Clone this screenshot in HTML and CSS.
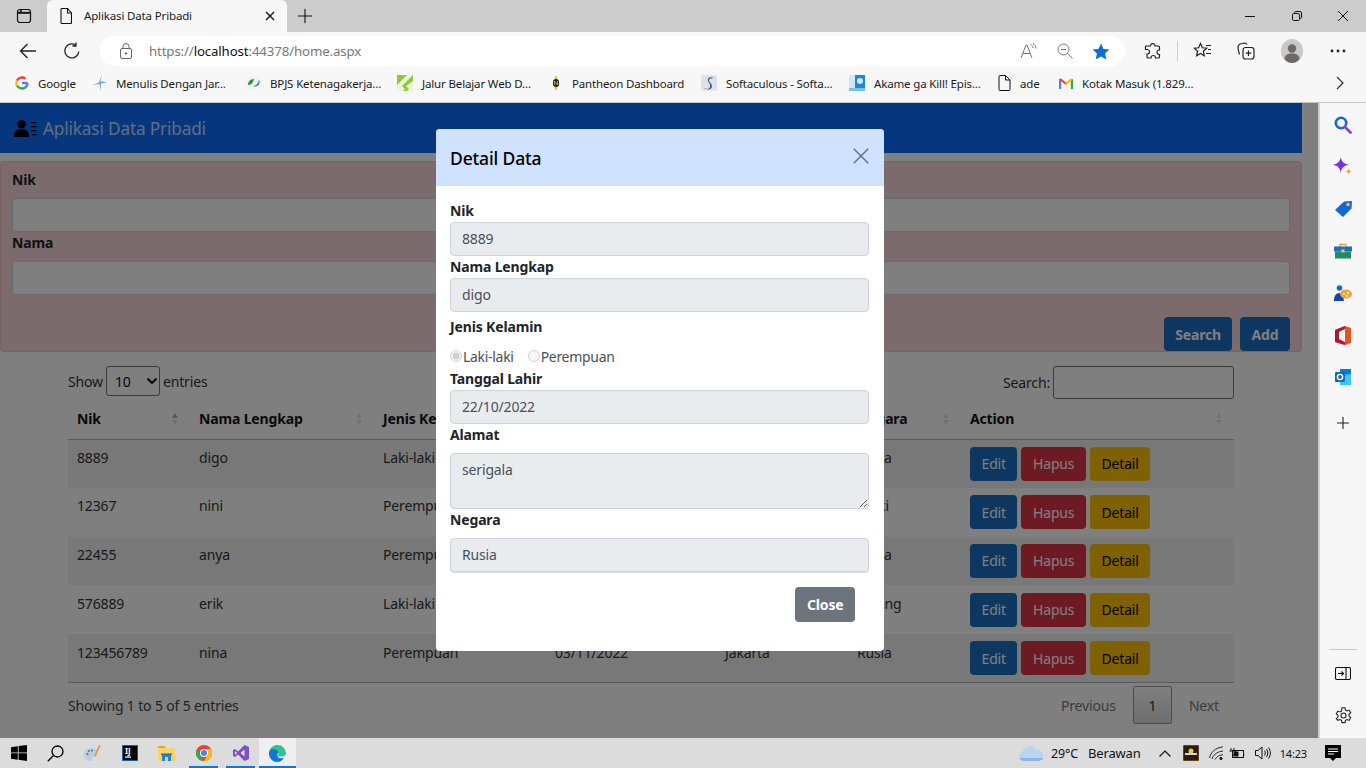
FILE: index.html
```html
<!DOCTYPE html>
<html lang="en">
<head>
  <meta charset="UTF-8">
  <title>Aplikasi Data Pribadi</title>
  <link rel="stylesheet" href="styles.css">
</head>
<body>

  <!-- Tab strip -->
  <div class="tabstrip">
    <span class="tab-action">
      <svg width="16" height="16" viewBox="0 0 16 16" fill="none" stroke="#111" stroke-width="1.2"><rect x="1.5" y="1.5" width="13" height="13" rx="2.5"/><path d="M1.5 5h13M5 1.5V5" stroke-width="1.6"/><path d="M1.5 4.5h13" /></svg>
    </span>
    <div class="tab">
      <svg width="12" height="16" viewBox="0 0 12 16" fill="none" stroke="#111" stroke-width="1.1"><path d="M1 1.5a1 1 0 0 1 1-1h5.5L11.5 5v9.5a1 1 0 0 1-1 1H2a1 1 0 0 1-1-1z"/><path d="M7.5.5V5h4"/></svg>
      <span class="tab-title">Aplikasi Data Pribadi</span>
      <svg class="tab-close" width="10" height="10" viewBox="0 0 10 10" stroke="#111" stroke-width="1.4"><path d="M1 1l8 8M9 1l-8 8"/></svg>
    </div>
    <svg class="tab-new" width="14" height="14" viewBox="0 0 14 14" stroke="#111" stroke-width="1.1"><path d="M7 0v14M0 7h14"/></svg>
    <div class="window-controls">
      <svg width="10" height="10" viewBox="0 0 10 10" stroke="#111"><path d="M0 5.5h10"/></svg>
      <svg width="10" height="10" viewBox="0 0 10 10" fill="none" stroke="#111"><rect x=".5" y="2.5" width="7" height="7" rx="1.2"/><path d="M2.5 2.5V1.8A1.3 1.3 0 0 1 3.8.5h4.4a1.3 1.3 0 0 1 1.3 1.3v4.4a1.3 1.3 0 0 1-1.3 1.3h-.7"/></svg>
      <svg width="10" height="10" viewBox="0 0 10 10" stroke="#111"><path d="M0 0l10 10M10 0L0 10"/></svg>
    </div>
  </div>

  <!-- Address bar -->
  <div class="toolbar">
    <span class="tool-btn">
      <svg width="18" height="16" viewBox="0 0 18 16" fill="none" stroke="#222" stroke-width="1.4"><path d="M17 8H1.5M8.5 1L1.5 8l7 7"/></svg>
    </span>
    <span class="tool-btn">
      <svg width="18" height="18" viewBox="0 0 18 18" fill="none" stroke="#222" stroke-width="1.3"><path d="M15.8 9.5A7 7 0 1 1 12.6 3"/><path d="M13 .5V4H9.5"/></svg>
    </span>
    <div class="urlbar">
      <svg class="lock" width="12" height="16" viewBox="0 0 12 16" fill="none" stroke="#666" stroke-width="1"><rect x=".5" y="5.5" width="11" height="10" rx="1.5"/><path d="M3 5.5V3.5a3 3 0 0 1 6 0v2"/><circle cx="6" cy="10.5" r=".8" fill="#666"/></svg>
      <span class="url"><span class="url-dim">https://</span>localhost<span class="url-dim">:44378/home.aspx</span></span>
      <span class="url-icon">
        <svg width="18" height="16" viewBox="0 0 18 16" fill="none" stroke="#777" stroke-width="1"><path d="M1 15L6 2h1l5 13M3 10.5h7"/><path d="M10.5 1.5c1.5.5 2.5 1.800 2.500 3.500M13 .5c1.800.8 3 2.500 3 5"/></svg>
      </span>
      <span class="url-icon">
        <svg width="16" height="16" viewBox="0 0 16 16" fill="none" stroke="#777" stroke-width="1"><circle cx="6.500" cy="6.500" r="5.500"/><path d="M10.500 10.500l5 5M4 6.500h5"/></svg>
      </span>
      <span class="url-icon">
        <svg width="18" height="17" viewBox="0 0 18 17" fill="#0a6fd1"><path d="M9 .5l2.500 5.500 6 .6-4.500 4 1.300 6L9 13.500l-5.300 3.100 1.300-6-4.500-4 6-.6z"/></svg>
      </span>
    </div>
    <span class="tool-btn wide first">
      <svg width="18" height="18" viewBox="0 0 18 18" fill="none" stroke="#222" stroke-width="1.2"><path d="M6.500 3.500a2.300 2.300 0 0 1 4.500 0V4h3.500a1 1 0 0 1 1 1v3h-.7a2.300 2.300 0 0 0 0 4.500h.7v2.500a1 1 0 0 1-1 1h-3v-.7a2.300 2.300 0 0 0-4.500 0v.7h-3a1 1 0 0 1-1-1v-3h.7a2.300 2.300 0 0 0 0-4.500H1.500V5a1 1 0 0 1 1-1h4z"/></svg>
    </span>
    <span class="tool-sep"></span>
    <span class="tool-btn wide">
      <svg width="19" height="18" viewBox="0 0 19 18" fill="none" stroke="#222" stroke-width="1.2"><path d="M7.500 1.500l1.900 4.300 4.300.4-3.300 3 .9 4.500-3.800-2.300-3.800 2.300.9-4.500-3.300-3 4.300-.4z"/><path d="M13 3.500h5M15 7.500h3M13 11.500h5"/></svg>
    </span>
    <span class="tool-btn wide">
      <svg width="18" height="18" viewBox="0 0 18 18" fill="none" stroke="#222" stroke-width="1.2"><path d="M2.500 12.500C1.500 9 1 6.500 1 5c0-1.500 1-2.500 2-3l5-1c1 0 1.500.5 2 1.500"/><rect x="6" y="5.500" width="11" height="11.500" rx="2.500"/><path d="M11.500 8.500v5.500M8.700 11.200h5.600"/></svg>
    </span>
    <span class="tool-btn wide avatar-btn">
      <svg width="22" height="24" viewBox="0 0 22 24"><ellipse cx="11" cy="12" rx="11" ry="12" fill="#c9c8c6"/><circle cx="11" cy="9.500" r="4.200" fill="#6b6a69"/><path d="M3.500 20c0-3.800 3.400-5.500 7.500-5.500s7.500 1.700 7.500 5.500c-1.800 2.500-4.500 4-7.500 4s-5.700-1.500-7.500-4z" fill="#6b6a69"/></svg>
    </span>
    <span class="tool-btn wide">
      <svg width="16" height="4" viewBox="0 0 16 4" fill="#222"><circle cx="2" cy="2" r="1.400"/><circle cx="8" cy="2" r="1.400"/><circle cx="14" cy="2" r="1.400"/></svg>
    </span>
  </div>

  <!-- Favorites bar -->
  <div class="bookmarks">
    <div class="bookmark">
      <svg width="14" height="14" viewBox="0 0 14 14" fill="none" stroke-width="2.400"><path d="M12.600 7H7" stroke="#4285f4"/><path d="M12.600 7a5.700 5.700 0 0 1-2 4.300" stroke="#4285f4"/><path d="M10.600 11.300A5.700 5.700 0 0 1 2 9.500" stroke="#34a853"/><path d="M2 9.500a5.700 5.700 0 0 1 0-5" stroke="#fbbc05"/><path d="M2 4.500a5.700 5.700 0 0 1 8.400-1.800" stroke="#ea4335"/></svg>
      <span>Google</span>
    </div>
    <div class="bookmark">
      <svg width="14" height="16" viewBox="0 0 14 16" fill="#6fa8dc"><path d="M9 0L7.500 6 14 7.500 7.800 8.500 8 16 6.300 9 0 10l5.800-2.500z"/></svg>
      <span>Menulis Dengan Jar...</span>
    </div>
    <div class="bookmark">
      <svg width="14" height="14" viewBox="0 0 14 14"><circle cx="7" cy="7" r="7" fill="#f1f1f1"/><path d="M1 9c0-4 3-6 6-6-1 3-2 6-6 6z" fill="#1a9a3e"/><path d="M6 10c3 0 5-2 6-6 2 4-2 8-6 6z" fill="#1f7fc4"/></svg>
      <span>BPJS Ketenagakerja...</span>
    </div>
    <div class="bookmark">
      <svg width="16" height="16" viewBox="0 0 16 16"><rect width="16" height="16" fill="#8dc63f"/><path d="M0 10L10 0h6L5 11 8 14l-2 2H0zM16 6v10H10l2-2-3-3z" fill="#e9f4d8"/></svg>
      <span>Jalur Belajar Web D...</span>
    </div>
    <div class="bookmark">
      <svg width="14" height="16" viewBox="0 0 14 16"><path d="M7 0l1.500 4h-3zM7 16l-1.500-4h3z" fill="#e8b71a"/><rect x="4" y="4" width="6" height="8" rx="3" fill="#222"/><path d="M5.500 10V6l3 4V6" fill="none" stroke="#e8b71a" stroke-width=".8"/></svg>
      <span>Pantheon Dashboard</span>
    </div>
    <div class="bookmark">
      <svg width="16" height="16" viewBox="0 0 16 16"><rect width="16" height="16" rx="2" fill="#dfe3e8"/><path d="M13 3C9 1 6 3 7 6s3 3 2 6-5 2-7 0c2 3 9 4 9-1 0-3-3-3-3-6 0-1 2-2 5-2z" fill="#3c6080"/></svg>
      <span>Softaculous - Softa...</span>
    </div>
    <div class="bookmark">
      <svg width="16" height="16" viewBox="0 0 16 16"><rect width="16" height="16" fill="#cfe8f6"/><rect x="6" y="0" width="10" height="13" fill="#1d8ad6"/><circle cx="11" cy="6" r="3" fill="#cfe8f6"/><rect x="0" y="13" width="16" height="3" fill="#7cc0e8"/></svg>
      <span>Akame ga Kill! Epis...</span>
    </div>
    <div class="bookmark">
      <svg width="13" height="16" viewBox="0 0 13 16" fill="none" stroke="#111" stroke-width="1"><path d="M1 1.500a1 1 0 0 1 1-1h5.500L12 5v9.500a1 1 0 0 1-1 1H2a1 1 0 0 1-1-1z"/><path d="M7.500.5V5H12"/></svg>
      <span>ade</span>
    </div>
    <div class="bookmark">
      <svg width="14" height="12" viewBox="0 0 14 12" fill="none" stroke-width="2.200"><path d="M1.100 12V2" stroke="#4285f4"/><path d="M12.900 12V2" stroke="#34a853"/><path d="M1.100 2L7 6.800" stroke="#ea4335"/><path d="M7 6.800L12.900 2" stroke="#fbbc05"/></svg>
      <span>Kotak Masuk (1.829...</span>
    </div>
    <svg class="bookmarks-more" width="8" height="14" viewBox="0 0 8 14" fill="none" stroke="#333" stroke-width="1.200"><path d="M1 1l6 6-6 6"/></svg>
  </div>

  <div class="workspace">
    <div class="page">
      <div class="page-inner">

        <div class="navbar">
          <svg width="23" height="17" viewBox="0 0 23 17" fill="#000"><circle cx="7.500" cy="4.200" r="4.200"/><path d="M0 17v-1.800C0 12 2.500 9.500 5 9.500h5c2.500 0 5 2.500 5 5.700V17z"/><path d="M17 2h5.500v1.300H17zM17 6h5.500v1.300H17zM17.500 10h5v1.300h-5zM18 14h4.500v1.300H18z"/></svg>
          <span class="navbar-brand">Aplikasi Data Pribadi</span>
        </div>

        <div class="search-panel">
          <label class="field-label">Nik</label>
          <input class="form-control" type="text">
          <label class="field-label">Nama</label>
          <input class="form-control" type="text">
          <div class="panel-actions">
            <button class="btn btn-blue btn-strong btn-search">Search</button>
            <button class="btn btn-blue btn-strong">Add</button>
          </div>
        </div>

        <div class="table-wrap">
          <div class="table-top">
            <div class="table-length">
              Show
              <span class="select-wrap">
                <select class="length-select"><option>10</option></select>
                <svg width="12" height="8" viewBox="0 0 12 8" fill="none" stroke="#111" stroke-width="2"><path d="M1.500 1.500L6 6l4.500-4.500"/></svg>
              </span>
              entries
            </div>
            <div class="table-filter">Search: <input class="filter-input" type="text"></div>
          </div>

          <table class="data-table">
            <thead>
              <tr>
                <th class="col-nik"><div class="th-inner">Nik <span class="sort sort-active"></span></div></th>
                <th class="col-nama"><div class="th-inner">Nama Lengkap <span class="sort"></span></div></th>
                <th class="col-jk"><div class="th-inner">Jenis Kelamin <span class="sort"></span></div></th>
                <th class="col-tgl"><div class="th-inner">Tanggal Lahir <span class="sort"></span></div></th>
                <th class="col-alamat"><div class="th-inner">Alamat <span class="sort"></span></div></th>
                <th class="col-negara"><div class="th-inner">Negara <span class="sort"></span></div></th>
                <th><div class="th-inner">Action <span class="sort"></span></div></th>
              </tr>
            </thead>
            <tbody>
              <tr>
                <td>8889</td><td>digo</td><td>Laki-laki</td><td>22/10/2022</td><td>serigala</td><td>Rusia</td>
                <td class="actions"><button class="btn btn-blue">Edit</button><button class="btn btn-red">Hapus</button><button class="btn btn-yellow">Detail</button></td>
              </tr>
              <tr>
                <td>12367</td><td>nini</td><td>Perempuan</td><td>01/02/2022</td><td>Bandung</td><td>Turki</td>
                <td class="actions"><button class="btn btn-blue">Edit</button><button class="btn btn-red">Hapus</button><button class="btn btn-yellow">Detail</button></td>
              </tr>
              <tr>
                <td>22455</td><td>anya</td><td>Perempuan</td><td>10/05/2022</td><td>Bogor</td><td>Rusia</td>
                <td class="actions"><button class="btn btn-blue">Edit</button><button class="btn btn-red">Hapus</button><button class="btn btn-yellow">Detail</button></td>
              </tr>
              <tr>
                <td>576889</td><td>erik</td><td>Laki-laki</td><td>15/08/2022</td><td>Depok</td><td>Jepang</td>
                <td class="actions"><button class="btn btn-blue">Edit</button><button class="btn btn-red">Hapus</button><button class="btn btn-yellow">Detail</button></td>
              </tr>
              <tr>
                <td>123456789</td><td>nina</td><td>Perempuan</td><td>03/11/2022</td><td>Jakarta</td><td>Rusia</td>
                <td class="actions"><button class="btn btn-blue">Edit</button><button class="btn btn-red">Hapus</button><button class="btn btn-yellow">Detail</button></td>
              </tr>
            </tbody>
          </table>

          <div class="table-bottom">
            <span>Showing 1 to 5 of 5 entries</span>
            <div class="pager">
              <span class="pager-link">Previous</span>
              <span class="pager-current">1</span>
              <span class="pager-link">Next</span>
            </div>
          </div>
        </div>
      </div>

      <!-- Modal -->
      <div class="backdrop"></div>
      <div class="modal">
        <div class="modal-header">
          <span class="modal-title">Detail Data</span>
          <svg width="16" height="16" viewBox="0 0 16 16" stroke="#6c7480" stroke-width="1.600"><path d="M.8.8l14.400 14.400M15.200.8L.8 15.200"/></svg>
        </div>
        <div class="modal-body">
          <label class="field-label">Nik</label>
          <input class="form-control" type="text" value="8889" disabled>
          <label class="field-label">Nama Lengkap</label>
          <input class="form-control" type="text" value="digo" disabled>
          <label class="field-label label-jk">Jenis Kelamin</label>
          <div class="radio-row">
            <label class="radio-item"><input type="radio" checked disabled>Laki-laki</label>
            <label class="radio-item"><input type="radio" disabled>Perempuan</label>
          </div>
          <label class="field-label">Tanggal Lahir</label>
          <input class="form-control" type="text" value="22/10/2022" disabled>
          <label class="field-label gap-below">Alamat</label>
          <textarea class="form-control area" disabled>serigala</textarea>
          <label class="field-label gap-below">Negara</label>
          <input class="form-control negara-input" type="text" value="Rusia" disabled>
          <div class="modal-footer">
            <button class="btn btn-grey btn-strong">Close</button>
          </div>
        </div>
      </div>
    </div>

    <!-- Edge sidebar -->
    <div class="sidebar">
      <span class="side-icon"><svg width="18" height="18" viewBox="0 0 18 18" fill="none"><circle cx="7" cy="7" r="5.200" stroke="#1467d8" stroke-width="2.600"/><path d="M11 11l5.500 5.500" stroke="#8a3fd6" stroke-width="2.800" stroke-linecap="round"/></svg></span>
      <span class="side-icon"><svg width="20" height="20" viewBox="0 0 18 18"><path d="M7 0c.6 4 2.500 6 7 7-4.500 1-6.400 3-7 7.500C6.400 10 4.500 8 0 7c4.500-1 6.400-3 7-7z" fill="#7b2ff2"/><path d="M14 10c.2 1.800 1 2.600 3 3-2 .4-2.800 1.200-3 3-.2-1.800-1-2.600-3-3 2-.4 2.800-1.200 3-3z" fill="#f5a623"/></svg></span>
      <span class="side-icon"><svg width="17" height="16" viewBox="0 0 17 16"><path d="M0 9l9-8.500 8-.5-.5 7.500L8 16z" fill="#1467d8"/><circle cx="13" cy="3.500" r="1.700" fill="#ffc83d"/></svg></span>
      <span class="side-icon"><svg width="18" height="16" viewBox="0 0 18 16"><path d="M6 4V1.500h6V4" fill="none" stroke="#e8a33d" stroke-width="1.400"/><rect y="3.500" width="18" height="5" fill="#1c6fb8"/><rect x="1" y="8.500" width="16" height="7" fill="#1d8a6e"/><rect x="7.500" y="6.500" width="3" height="3" fill="#ffc83d"/></svg></span>
      <span class="side-icon"><svg width="18" height="17" viewBox="0 0 18 17"><circle cx="5.500" cy="3" r="2.800" fill="#1467d8"/><path d="M0 16c0-5 2-8 5.500-8S9 10 10 16z" fill="#1240b8"/><ellipse cx="12" cy="9" rx="6" ry="4.500" fill="#e8a33d"/><circle cx="10" cy="9" r=".9" fill="#fff"/><circle cx="14" cy="8" r=".9" fill="#fff"/><circle cx="13" cy="11" r=".9" fill="#fff"/></svg></span>
      <span class="side-icon"><svg width="16" height="19" viewBox="0 0 16 19"><path d="M10 0l6 2v15l-6 2-10-3V4z" fill="#e8501f"/><path d="M0 4l10-4v3L4 6v7l6 3v3L0 16z" fill="#b5162e"/><path d="M4 6l6-3v13l-6-3z" fill="#fff"/></svg></span>
      <span class="side-icon"><svg width="16" height="16" viewBox="0 0 16 16"><rect x="5" y="0" width="11" height="16" fill="#28a8ea"/><rect x="5" y="0" width="11" height="5" fill="#0f78d4"/><path d="M5 9l11-4v11H5z" fill="#50d9ff" opacity=".6"/><rect y="3" width="10" height="10" rx="1" fill="#0f6cbd"/><circle cx="5" cy="8" r="2.600" fill="none" stroke="#fff" stroke-width="1.400"/></svg></span>
      <span class="side-icon side-plus"><svg width="14" height="14" viewBox="0 0 14 14" stroke="#222" stroke-width="1.100"><path d="M7 1v12M1 7h12"/></svg></span>
      <div class="side-bottom">
        <span class="side-sep"></span>
        <span class="side-icon"><svg width="16" height="13" viewBox="0 0 16 13" fill="none" stroke="#111" stroke-width="1.100"><rect x=".5" y=".5" width="15" height="12" rx="1.500"/><path d="M11 .5v12M3 6.500h5.500M6.500 4.500l2 2-2 2"/></svg></span>
        <span class="side-icon"><svg width="17" height="17" viewBox="0 0 17 17" fill="none" stroke="#222" stroke-width="1.100"><circle cx="8.500" cy="8.500" r="2.500"/><path d="M7 .8h3l.5 2.300 1.500.8 2.200-.8 1.500 2.600-1.700 1.600v1.800l1.700 1.600-1.500 2.600-2.200-.8-1.500.8-.5 2.300H7l-.5-2.300-1.500-.8-2.200.8L1.300 11.700 3 10.100V8.300L1.300 6.700l1.500-2.600 2.200.8 1.500-.8z"/></svg></span>
      </div>
    </div>
  </div>

  <!-- Windows taskbar -->
  <div class="taskbar">
    <div class="task-apps">
      <span class="task-app"><svg width="16" height="16" viewBox="0 0 16 16" fill="#000"><path d="M0 2.200L6.800 1.200v6.300H0zM7.600 1.100L16 0v7.500H7.600zM0 8.300h6.800v6.400L0 13.800zM7.600 8.300H16V16l-8.400-1.200z"/></svg></span>
      <span class="task-app"><svg width="17" height="17" viewBox="0 0 17 17" fill="none" stroke="#000" stroke-width="1.300"><circle cx="10.500" cy="6.500" r="5.500"/><path d="M6.500 10.500L.8 16.200"/></svg></span>
      <span class="task-app"><svg width="17" height="17" viewBox="0 0 17 17"><path d="M7 3C3 3 0 6 0 9.500S3 16 7 16c2 0 2-1.500 1.500-2.500S9 11 11 11s3-1 3-3-3-5-7-5z" fill="#b8cfe0"/><circle cx="3.500" cy="9" r="1" fill="#d64541"/><circle cx="5" cy="6" r="1" fill="#2f9e44"/><circle cx="8" cy="5.500" r="1" fill="#1c7ed6"/><path d="M15 0l1.500 1-4 8-1.500 3-1-.6 1.500-3.400z" fill="#e8913d"/></svg></span>
      <span class="task-app"><svg width="16" height="16" viewBox="0 0 16 16"><rect width="16" height="16" fill="#000" stroke="#1c86ee" stroke-width="1.400"/><rect x="3" y="11.500" width="6" height="1.200" fill="#fff"/><text class="ij-text" x="3" y="9">IJ</text></svg></span>
      <span class="task-app"><svg width="17" height="15" viewBox="0 0 17 15"><path d="M0 1a1 1 0 0 1 1-1h5l2 2H0z" fill="#e6a823"/><rect y="2" width="17" height="13" fill="#fbd16a"/><path d="M4 15V8h9v7h-3v-4H7v4z" fill="#1c86d8"/><path d="M3 7.500h11V9H3z" fill="#1c6fb8"/></svg></span>
      <span class="task-app task-running"><svg width="16" height="16" viewBox="0 0 16 16"><circle cx="8" cy="8" r="8" fill="#ea4335"/><path d="M8 16A8 8 0 0 1 1 4l3.500 6L8 16z" fill="#34a853"/><path d="M16 8a8 8 0 0 1-8 8l3.500-6L8 4h7.400c.4 1.200.6 2.600.6 4z" fill="#fbbc05"/><circle cx="8" cy="8" r="4" fill="#fff"/><circle cx="8" cy="8" r="3" fill="#4285f4"/></svg></span>
      <span class="task-app task-running"><svg width="16" height="16" viewBox="0 0 16 16"><path d="M11.500 0L16 2v12l-4.500 2L5 9.500 2 12 0 11V5l2-1 3 2.500z" fill="#7d4fc4"/><path d="M11.500 4.500L7.500 8l4 3.500zM2 6v4l2-2z" fill="#e8e2f5"/></svg></span>
      <span class="task-app task-running task-active"><svg width="17" height="17" viewBox="0 0 17 17"><path d="M8.500 0a8.500 8.500 0 0 1 8.500 8.500c0 2-2 3-4 3H8c0-2 2-2.500 2-4S8 5 6 5 1.500 6 .5 5.500C1.500 2.500 4.500 0 8.500 0z" fill="#2fc28c"/><path d="M.5 5.500C3 3.500 8 4 9.500 6.500c1 2-1.500 2-1.500 3.500 0 3 4 4 7 2.500-1.500 3-4 4.500-7 4.500A8.500 8.500 0 0 1 .5 5.500z" fill="#0f78d4"/></svg></span>
    </div>
    <div class="tray">
      <svg class="tray-cloud" width="25" height="16" viewBox="0 0 25 16"><path d="M5 16a5 5 0 0 1-1-9.800A7 7 0 0 1 17 5a5.500 5.500 0 0 1 2.500 11z" fill="#b8d4f0"/><path d="M5 16a5 5 0 0 1-4.500-3h24a5.500 5.500 0 0 1-5 3z" fill="#8ab4e8"/></svg>
      <span class="tray-temp">29°C</span>
      <span class="tray-weather">Berawan</span>
      <svg class="tray-caret" width="12" height="7" viewBox="0 0 12 7" fill="none" stroke="#111" stroke-width="1.200"><path d="M.5 6.500L6 1l5.500 5.500"/></svg>
      <svg class="tray-app" width="16" height="16" viewBox="0 0 16 16"><rect width="16" height="16" rx="1.500" fill="#2a1c10" stroke="#b5651d"/><circle cx="8" cy="6" r="2.500" fill="#f5c542"/><rect x="2" y="8" width="12" height="2" fill="#cfd8dc"/></svg>
      <svg class="tray-wifi" width="15" height="14" viewBox="0 0 15 14" fill="none" stroke="#222" stroke-width="1"><path d="M.5 12C2 6 6 2 14 .8M3 13c1-3.500 4-7 11-8M6 13.500c1-2 3-4 8-4.800"/><circle cx="12" cy="12.500" r="1.200" fill="#222"/></svg>
      <svg class="tray-battery" width="16" height="11" viewBox="0 0 16 11" fill="none" stroke="#111"><rect x="3.500" y="2.500" width="11" height="7"/><path d="M14.500 5v2h1"/><rect x="5" y="4" width="4" height="4" fill="#111"/><path d="M2 0v3M5 0v3M.5 3h6v2c0 1-1 2-3 2v3" stroke-width="1"/></svg>
      <svg class="tray-volume" width="17" height="14" viewBox="0 0 17 14" fill="none" stroke="#111"><path d="M.5 4.500h2.500L7 1v12L3 9.500H.5z"/><path d="M9.500 4.500c1 1.500 1 3.500 0 5M11.500 3c1.700 2.500 1.700 5.500 0 8M13.500 1.500c2.500 3.500 2.500 7.500 0 11"/></svg>
      <span class="tray-clock">14:23</span>
      <svg class="tray-notif" width="16" height="16" viewBox="0 0 16 16"><path d="M0 0h16v13h-5l-3 3-3-3H0z" fill="#000"/><path d="M3 4h10M3 6.500h10M3 9h6" stroke="#fff"/></svg>
    </div>
  </div>

</body>
</html>
```
FILE: styles.css
```css
/* Basic Reset */
* {
  margin: 0;
  padding: 0;
  box-sizing: border-box;
}

body {
  font-family: "Noto Sans", "Open Sans", sans-serif;
  font-size: 14px;
  letter-spacing: -0.15px;
  width: 1366px;
  height: 768px;
  overflow: hidden;
  display: flex;
  flex-direction: column;
  color: #212529;
  background: #fff;
}

input,
select,
textarea,
button {
  letter-spacing: inherit;
}

/* Tab strip */
.tabstrip {
  height: 32px;
  background: #cccccc;
  display: flex;
  align-items: center;
}

.tab-action {
  width: 47px;
  display: flex;
  justify-content: center;
}

.tab {
  width: 240px;
  height: 32px;
  background: #f7f7f7;
  border-radius: 6px 6px 0 0;
  display: flex;
  align-items: center;
  padding: 0 12px 0 13px;
}

.tab-title {
  margin-left: 12px;
  margin-bottom: 2px;
  font-size: 11.500px;
  color: #1a1a1a;
  flex: 1;
}

.tab-new {
  margin-left: 11px;
}

.window-controls {
  margin-left: auto;
  width: 121px;
  display: grid;
  grid-template-columns: 47px 46px 28px;
  align-items: center;
}

/* Address bar */
.toolbar {
  height: 37px;
  background: #f7f7f7;
  display: flex;
  align-items: center;
  padding: 1px 0 0 8px;
}

.tool-btn {
  width: 40px;
  display: flex;
  justify-content: center;
  align-items: center;
  margin-right: 4px;
}

.tool-btn.wide {
  width: 44px;
  margin-right: 0;
}

.tool-btn.first {
  margin-left: 6px;
}

.tool-sep {
  width: 1px;
  height: 20px;
  background: #cfcfcf;
  margin: 0 2px;
}

.avatar-btn {
  margin-left: 2px;
  margin-right: 2px !important;
}

.urlbar {
  width: 1025px;
  height: 30px;
  background: #fff;
  border-radius: 15px;
  display: flex;
  align-items: center;
  margin-left: 4px;
  padding-left: 20px;
  padding-right: 6px;
}

.lock {
  margin-right: 17px;
}

.url {
  font-size: 13.300px;
  color: #111;
  flex: 1;
}

.url-dim {
  color: #767676;
}

.url-icon {
  width: 36px;
  display: flex;
  justify-content: center;
}

/* Favorites bar */
.bookmarks {
  height: 34px;
  background: #f7f7f7;
  border-bottom: 1px solid #c4c4c4;
  display: grid;
  grid-template-columns: 78px 154px 150px 152px 152px 148px 149px 61px 277px 1fr;
  align-items: center;
  padding-left: 15px;
  padding-bottom: 5px;
  font-size: 11.500px;
  color: #1a1a1a;
}

.bookmark {
  display: flex;
  align-items: center;
  gap: 9px;
  white-space: nowrap;
}

.bookmarks-more {
  justify-self: start;
}

/* Page area */
.workspace {
  flex: 1;
  display: flex;
  min-height: 0;
}

.page {
  width: 1318px;
  position: relative;
  overflow: hidden;
  background: #fff;
}

.page-inner {
  width: 1302px;
}

.navbar {
  height: 50px;
  background: #0d6efd;
  display: flex;
  align-items: center;
  gap: 6px;
  padding-left: 14px;
}

.navbar-brand {
  font-size: 17.200px;
  color: rgba(255, 255, 255, 0.75);
}

/* Search panel */
.search-panel {
  margin-top: 8px;
  height: 191px;
  background: #f8d7da;
  border: 1px solid #f5c2c7;
  border-radius: 4px;
  padding: 7px 11px 0;
}

.field-label {
  display: block;
  height: 22px;
  line-height: 22px;
  font-weight: 700;
  color: #212529;
}

.search-panel .field-label {
  margin-bottom: 7px;
}

.form-control {
  display: block;
  width: 100%;
  height: 34px;
  padding: 0 11px 2px;
  background: #fff;
  border: 1px solid #ced4da;
  border-radius: 4px;
  font-family: inherit;
  font-size: 14px;
  color: #212529;
}

.form-control:disabled {
  background: #e9ecef;
  opacity: 1;
  -webkit-text-fill-color: #495057;
}

.negara-input {
  box-shadow: 0 1px 0 #dee2e6;
}

.panel-actions {
  display: flex;
  justify-content: flex-end;
  gap: 8px;
  margin-top: 22px;
}

/* Buttons */
.btn {
  height: 34px;
  padding: 0 11.500px;
  border: none;
  border-radius: 4px;
  font-family: inherit;
  font-size: 14px;
}

.btn-strong {
  font-weight: 700;
}

.btn-search {
  padding: 0 11px;
}

.btn-blue {
  background: #1b6ec2;
  color: #fff;
}

.btn-red {
  background: #dc3545;
  color: #fff;
}

.btn-yellow {
  background: #ffc107;
  color: #000;
}

.btn-grey {
  background: #6c757d;
  color: #fff;
}

/* Table */
.table-wrap {
  margin: 14px 68px 0;
}

.table-top {
  display: flex;
  justify-content: space-between;
  align-items: flex-start;
  height: 33px;
}

.table-length {
  height: 30px;
  display: flex;
  align-items: center;
  gap: 3px;
  color: #333;
}

.select-wrap {
  position: relative;
  display: flex;
}

.select-wrap svg {
  position: absolute;
  right: 2px;
  top: 11px;
  pointer-events: none;
}

.length-select {
  appearance: none;
  width: 54px;
  height: 30px;
  padding-left: 8px;
  background: #fff;
  border: 1px solid #767676;
  border-radius: 3px;
  font-family: inherit;
  font-size: 14px;
  color: #111;
}

.table-filter {
  display: flex;
  align-items: center;
  gap: 3px;
  color: #333;
}

.filter-input {
  width: 181px;
  height: 33px;
  border: 1px solid #767676;
  border-radius: 3px;
  background: #fff;
}

.data-table {
  width: 1166px;
  table-layout: fixed;
  border-collapse: collapse;
  border-bottom: 1px solid #b3b3b3;
}

.col-nik { width: 122px; }
.col-nama { width: 184px; }
.col-jk { width: 172px; }
.col-tgl { width: 170px; }
.col-alamat { width: 132px; }
.col-negara { width: 113px; }

.data-table th {
  height: 40px;
  padding: 0 9px;
  text-align: left;
  font-weight: 700;
  color: #111;
  border-bottom: 1px solid #b3b3b3;
  white-space: nowrap;
  overflow: hidden;
}

.th-inner {
  display: flex;
  justify-content: space-between;
  align-items: center;
  padding-right: 3px;
}

.sort {
  display: flex;
  flex-direction: column;
  gap: 2px;
}

.sort::before,
.sort::after {
  content: "";
  width: 0;
  height: 0;
  border-left: 3px solid transparent;
  border-right: 3px solid transparent;
}

.sort::before {
  border-bottom: 5px solid #e4e4e4;
}

.sort::after {
  border-top: 5px solid #e4e4e4;
}

.sort-active::before {
  border-bottom-color: #b0b0b0;
}

.data-table td {
  height: 48.800px;
  padding: 7.500px 9px 0;
  vertical-align: top;
  color: #333;
  line-height: 22px;
  white-space: nowrap;
  overflow: hidden;
}

.data-table tbody tr:nth-child(odd) {
  background: #f1f1f1;
}

.data-table td.actions {
  padding-top: 0;
  vertical-align: middle;
  font-size: 0;
}

.actions .btn {
  margin-right: 4px;
}

.table-bottom {
  display: flex;
  justify-content: space-between;
  align-items: center;
  height: 44px;
  color: #444;
}

.pager {
  display: flex;
  align-items: center;
  margin-right: 15px;
}

.pager-link {
  color: #777;
}

.pager-current {
  width: 39px;
  height: 38px;
  margin: 0 17px;
  display: flex;
  align-items: center;
  justify-content: center;
  border: 1px solid #979797;
  border-radius: 2px;
  background: linear-gradient(to bottom, #fff, #dcdcdc);
  color: #333;
}

/* Modal */
.backdrop {
  position: absolute;
  inset: 0;
  background: rgba(0, 0, 0, 0.5);
}

.modal {
  position: absolute;
  left: 436px;
  top: 26px;
  width: 448px;
  height: 522px;
  background: #fff;
  border-radius: 4px;
  overflow: hidden;
}

.modal-header {
  height: 57px;
  background: #cfe2ff;
  display: flex;
  align-items: center;
  justify-content: space-between;
  padding: 0 15px 0 14px;
}

.modal-title {
  font-size: 17.500px;
  color: #000;
  font-weight: 500;
}

.modal-header svg {
  margin-bottom: 3px;
}

.modal-body {
  padding: 14px 15px 0 14px;
}

.label-jk {
  margin-top: 4px;
  margin-bottom: 7px;
}

.gap-below {
  margin-bottom: 7px;
}

.radio-row {
  display: flex;
  gap: 14px;
  height: 23px;
  padding-bottom: 1px;
  align-items: center;
  color: #495057;
  letter-spacing: -0.3px;
}

.radio-item {
  display: flex;
  align-items: center;
}

.radio-item input {
  width: 12px;
  height: 12px;
  margin-right: 1px;
}

.area {
  height: 56px;
  padding-top: 6px;
  line-height: 20px;
  resize: vertical;
}

.modal-footer {
  display: flex;
  justify-content: flex-end;
  padding: 15px 14px 0 0;
}

.modal-footer .btn {
  height: 35px;
}

/* Sidebar */
.sidebar {
  width: 48px;
  background: #f7f7f7;
  border-left: 2px solid #d0d0d0;
  display: flex;
  flex-direction: column;
  padding-top: 1px;
}

.side-icon {
  height: 42px;
  display: flex;
  align-items: center;
  justify-content: center;
  flex-shrink: 0;
}

.side-plus {
  margin-top: 4px;
}

.side-bottom {
  margin-top: auto;
  padding-bottom: 2px;
  display: flex;
  flex-direction: column;
}

.side-sep {
  height: 1px;
  margin: 0 9px 2px;
  background: #c8c8c8;
}

/* Taskbar */
.taskbar {
  height: 30px;
  background: #dcdcdc;
  display: flex;
  justify-content: space-between;
}

.task-apps {
  display: flex;
}

.task-app {
  width: 37px;
  display: flex;
  align-items: center;
  justify-content: center;
  position: relative;
}

.task-running::after {
  content: "";
  position: absolute;
  left: 4px;
  right: 4px;
  bottom: 0;
  height: 2px;
  background: #0a78d4;
}

.task-active {
  background: #efefef;
}

.task-active::after {
  left: 0;
  right: 0;
}

.ij-text {
  font-size: 8px;
  font-weight: 700;
  fill: #fff;
}

.tray {
  display: flex;
  align-items: center;
  font-size: 12.500px;
  color: #111;
  padding-right: 25px;
}

.tray-temp {
  margin-left: 7px;
}

.tray-weather {
  margin-left: 10px;
  font-size: 13px;
}

.tray-caret {
  margin-left: 18px;
}

.tray-app {
  margin-left: 12px;
}

.tray-wifi {
  margin-left: 10px;
}

.tray-battery {
  margin-left: 5px;
}

.tray-volume {
  margin-left: 10px;
}

.tray-clock {
  margin-left: 8px;
  font-size: 11px;
}

.tray-notif {
  margin-left: 18px;
}
```
